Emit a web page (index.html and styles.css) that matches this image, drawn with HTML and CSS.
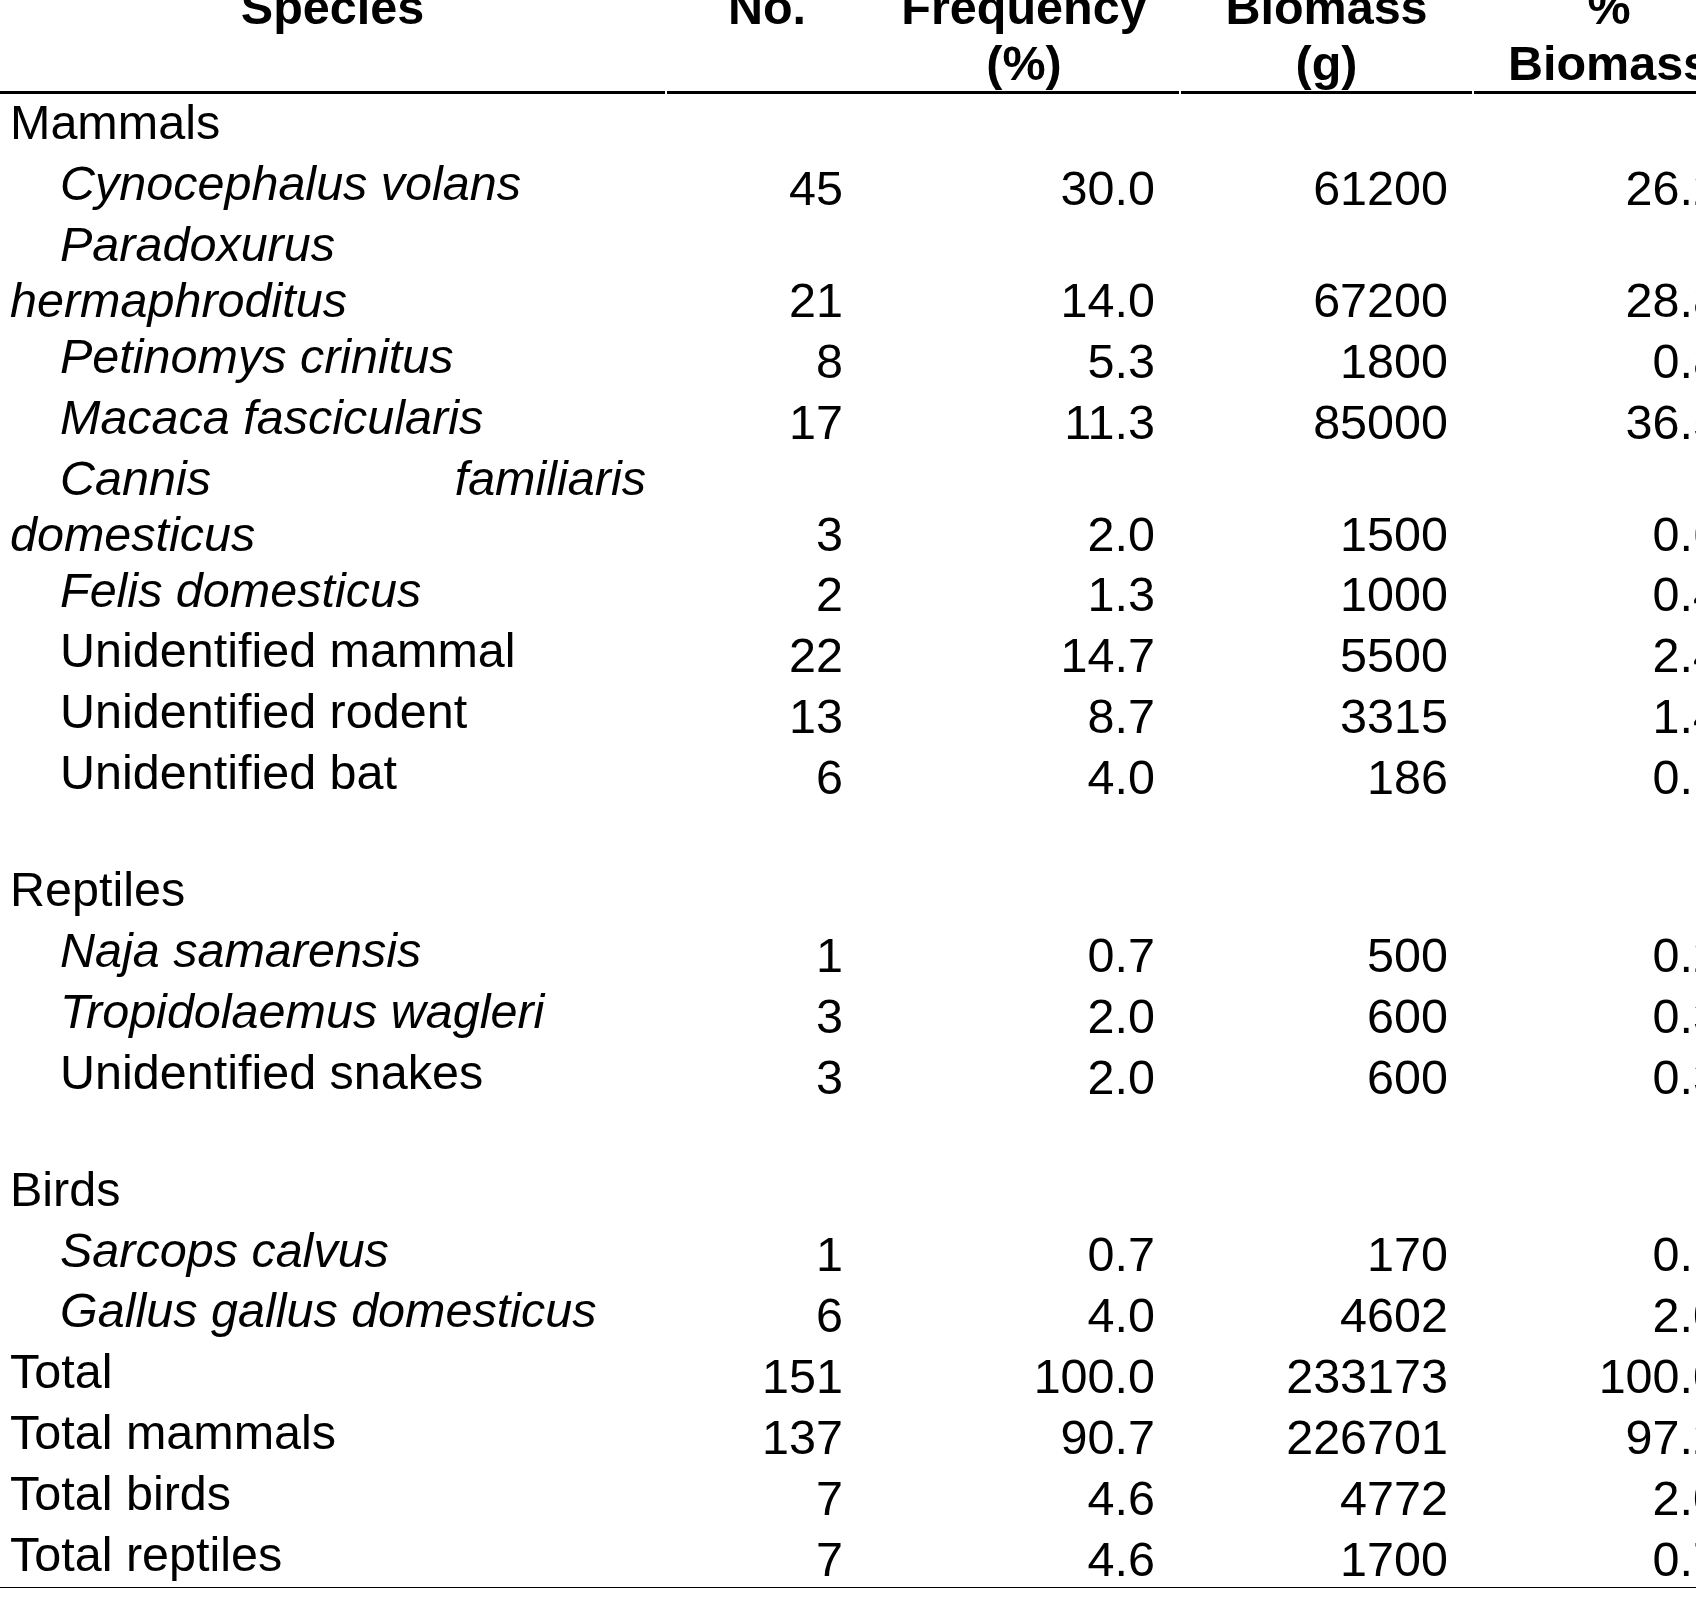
FILE: index.html
```html
<!DOCTYPE html>
<html lang="en">
<head>
<meta charset="utf-8">
<title>Prey remains</title>
<link rel="stylesheet" href="styles.css">
</head>
<body>
<div class="frame">
<table class="prey">
  <colgroup>
    <col class="c-sp"><col class="c-no"><col class="c-fr"><col class="c-bm"><col class="c-pb">
  </colgroup>
  <thead>
    <tr>
      <th class="top">Species</th>
      <th class="top joined">No.</th>
      <th>Frequency (%)</th>
      <th>Biomass (g)</th>
      <th>% Biomass</th>
    </tr>
  </thead>
  <tbody>
    <tr class="grp"><td class="lab">Mammals</td><td class="num">&nbsp;</td><td class="num">&nbsp;</td><td class="num">&nbsp;</td><td class="num pct">&nbsp;</td></tr>
    <tr><td class="lab"><i>Cynocephalus volans</i></td><td class="num">45</td><td class="num">30.0</td><td class="num">61200</td><td class="num pct">26.2</td></tr>
    <tr><td class="lab"><i>Paradoxurus hermaphroditus</i></td><td class="num">21</td><td class="num">14.0</td><td class="num">67200</td><td class="num pct">28.8</td></tr>
    <tr><td class="lab"><i>Petinomys crinitus</i></td><td class="num">8</td><td class="num">5.3</td><td class="num">1800</td><td class="num pct">0.8</td></tr>
    <tr><td class="lab"><i>Macaca fascicularis</i></td><td class="num">17</td><td class="num">11.3</td><td class="num">85000</td><td class="num pct">36.5</td></tr>
    <tr><td class="lab"><i>Cannis familiaris domesticus</i></td><td class="num">3</td><td class="num">2.0</td><td class="num">1500</td><td class="num pct">0.6</td></tr>
    <tr><td class="lab"><i>Felis domesticus</i></td><td class="num">2</td><td class="num">1.3</td><td class="num">1000</td><td class="num pct">0.4</td></tr>
    <tr><td class="lab">Unidentified mammal</td><td class="num">22</td><td class="num">14.7</td><td class="num">5500</td><td class="num pct">2.4</td></tr>
    <tr><td class="lab">Unidentified rodent</td><td class="num">13</td><td class="num">8.7</td><td class="num">3315</td><td class="num pct">1.4</td></tr>
    <tr><td class="lab">Unidentified bat</td><td class="num">6</td><td class="num">4.0</td><td class="num">186</td><td class="num pct">0.1</td></tr>
    <tr class="gap"><td class="lab">&nbsp;</td><td></td><td></td><td></td><td></td></tr>
    <tr class="grp"><td class="lab">Reptiles</td><td class="num">&nbsp;</td><td class="num">&nbsp;</td><td class="num">&nbsp;</td><td class="num pct">&nbsp;</td></tr>
    <tr><td class="lab"><i>Naja samarensis</i></td><td class="num">1</td><td class="num">0.7</td><td class="num">500</td><td class="num pct">0.2</td></tr>
    <tr><td class="lab"><i>Tropidolaemus wagleri</i></td><td class="num">3</td><td class="num">2.0</td><td class="num">600</td><td class="num pct">0.3</td></tr>
    <tr><td class="lab">Unidentified snakes</td><td class="num">3</td><td class="num">2.0</td><td class="num">600</td><td class="num pct">0.3</td></tr>
    <tr class="gap"><td class="lab">&nbsp;</td><td></td><td></td><td></td><td></td></tr>
    <tr class="grp"><td class="lab">Birds</td><td class="num">&nbsp;</td><td class="num">&nbsp;</td><td class="num">&nbsp;</td><td class="num pct">&nbsp;</td></tr>
    <tr><td class="lab"><i>Sarcops calvus</i></td><td class="num">1</td><td class="num">0.7</td><td class="num">170</td><td class="num pct">0.1</td></tr>
    <tr><td class="lab"><i>Gallus gallus domesticus</i></td><td class="num">6</td><td class="num">4.0</td><td class="num">4602</td><td class="num pct">2.0</td></tr>
    <tr class="grp"><td class="lab">Total</td><td class="num">151</td><td class="num">100.0</td><td class="num">233173</td><td class="num pct">100.0</td></tr>
    <tr class="grp"><td class="lab">Total mammals</td><td class="num">137</td><td class="num">90.7</td><td class="num">226701</td><td class="num pct">97.2</td></tr>
    <tr class="grp"><td class="lab">Total birds</td><td class="num">7</td><td class="num">4.6</td><td class="num">4772</td><td class="num pct">2.0</td></tr>
    <tr class="grp"><td class="lab">Total reptiles</td><td class="num">7</td><td class="num">4.6</td><td class="num">1700</td><td class="num pct">0.7</td></tr>
  </tbody>
</table>
</div>
</body>
</html>
```
FILE: styles.css
```css
html, body {
  margin: 0;
  padding: 0;
  background: #ffffff;
}

body {
  font-family: "Liberation Sans", Arial, Helvetica, sans-serif;
  color: #000000;
}

.frame {
  width: 1696px;
  height: 1620px;
  overflow: hidden;
}

.prey {
  border-collapse: separate;
  border-spacing: 2px 0;
  table-layout: fixed;
  width: 1744px;
  margin: -21px 0 0 -2px;
  font-size: 48.5px;
  line-height: 56px;
  border-bottom: 1px solid #000000;
}

.c-sp { width: 665px; }
.c-no { width: 200px; }
.c-fr { width: 310px; }
.c-bm { width: 291px; }
.c-pb { width: 270px; }

.prey th {
  font-weight: bold;
  text-align: center;
  vertical-align: bottom;
  padding: 0 23px;
  border-bottom: 3px solid #000000;
}

.prey th.top {
  vertical-align: top;
}

/* the rule under "No." runs on into the "Frequency" rule without a break */
.prey th.joined {
  position: relative;
}

.prey th.joined::after {
  content: "";
  position: absolute;
  right: -2px;
  bottom: -3px;
  width: 2px;
  height: 3px;
  background: #000000;
}

.prey td {
  padding: 0;
}

.prey td.lab {
  text-align: justify;
  text-indent: 50px;
  padding: 0 19px 0 10px;
  vertical-align: top;
}

.prey tr.grp td.lab {
  text-indent: 0;
}

.prey td.num {
  text-align: right;
  vertical-align: bottom;
  padding: 4.9px 24px 0 0;
}

.prey i {
  font-style: italic;
}
```
